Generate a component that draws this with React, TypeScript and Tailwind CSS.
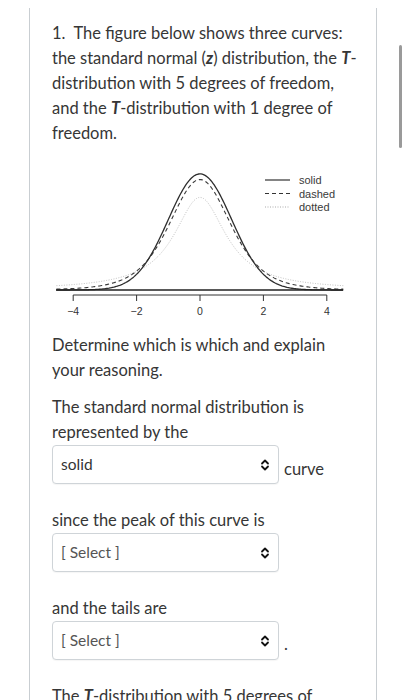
import React from 'react';

const CX = 148;
const UNIT = 31.7;
const BASE = 130;
const YS = 291;

const normal = (x: number) => Math.exp((-x * x) / 2) / Math.sqrt(2 * Math.PI);
const t5 = (x: number) => {
  const c = 0.3796066898224944;
  return c * Math.pow(1 + (x * x) / 5, -3);
};
const cauchy = (x: number) => 1 / (Math.PI * (1 + x * x));

const curvePath = (f: (x: number) => number) => {
  const pts: string[] = [];
  for (let i = 0; i <= 240; i++) {
    const x = -4.53 + (9.05 * i) / 240;
    const px = CX + x * UNIT;
    const py = BASE - f(x) * YS;
    pts.push(`${i === 0 ? 'M' : 'L'}${px.toFixed(2)},${py.toFixed(2)}`);
  }
  return pts.join(' ');
};

const Chevrons = () => (
  <svg width="10" height="12" viewBox="0 0 10 12" className="shrink-0">
    <path d="M2 4.5 L5 1.5 L8 4.5" fill="none" stroke="#111" strokeWidth="1.8" strokeLinecap="round" strokeLinejoin="round" />
    <path d="M2 7.5 L5 10.5 L8 7.5" fill="none" stroke="#111" strokeWidth="1.8" strokeLinecap="round" strokeLinejoin="round" />
  </svg>
);

const SelectBox = ({ value, muted }: { value: string; muted?: boolean }) => (
  <div className="flex h-[39px] w-[227px] items-center justify-between rounded-[4px] border border-[#cfd4d8] bg-white pl-[8px] pr-[8px] shadow-[0_1px_1px_rgba(0,0,0,0.04)]">
    <span className={`text-[15.5px] ${muted ? 'text-[#555]' : 'text-[#333]'}`}>{value}</span>
    <Chevrons />
  </div>
);

const Chart = () => {
  const ticks = [-4, -2, 0, 2, 4];
  return (
    <svg width="300" height="160" viewBox="0 0 300 160" className="block">
      <path d={curvePath(cauchy)} fill="none" stroke="#c2c2c2" strokeWidth="1" strokeDasharray="1 1.5" />
      <path d={curvePath(t5)} fill="none" stroke="#3c3c3c" strokeWidth="1.1" strokeDasharray="4 3" />
      <path d={curvePath(normal)} fill="none" stroke="#2e2e2e" strokeWidth="1.3" />
      <line x1="4" y1={BASE} x2="291" y2={BASE} stroke="#222" strokeWidth="1.6" />
      <line x1={CX - 4 * UNIT} y1="135" x2={CX + 4 * UNIT} y2="135" stroke="#333" strokeWidth="1" />
      {ticks.map((t) => (
        <g key={t}>
          <line x1={CX + t * UNIT} y1="135" x2={CX + t * UNIT} y2="141" stroke="#333" strokeWidth="1" />
          <text
            x={CX + t * UNIT}
            y="155"
            textAnchor="middle"
            fontSize="10.5"
            fill="#333"
            fontFamily="'Liberation Sans', Arial, sans-serif"
          >
            {t < 0 ? `\u2212${Math.abs(t)}` : t}
          </text>
        </g>
      ))}
      <g fontFamily="'Liberation Sans', Arial, sans-serif" fontSize="11" fill="#3a3a3a">
        <line x1="213" y1="20" x2="238" y2="20" stroke="#333" strokeWidth="1.2" />
        <line x1="213" y1="33.5" x2="238" y2="33.5" stroke="#333" strokeWidth="1.2" strokeDasharray="4 3" />
        <line x1="213" y1="47" x2="238" y2="47" stroke="#aaa" strokeWidth="1" strokeDasharray="1 1.5" />
        <text x="247" y="24">solid</text>
        <text x="247" y="37.5">dashed</text>
        <text x="247" y="51">dotted</text>
      </g>
    </svg>
  );
};

export default function App() {
  return (
    <div
      className="relative h-[700px] w-[406px] overflow-hidden bg-white text-[#363636]"
      style={{ fontFamily: "Lato, 'Open Sans', sans-serif" }}
    >
      <div className="absolute left-[399px] top-[45px] h-[103px] w-[3px] rounded-full bg-[#9a9a9a]" />
      <div className="ml-[29px] mt-[8px] h-[700px] w-[348px] border-x border-[#c9ced2] pl-[22px] pt-[13px]">
        <p className="whitespace-nowrap text-[16.5px] leading-[25px]">
          1.&nbsp; The figure below shows three curves:
          <br />
          the standard normal (<b className="italic">z</b>) distribution, the <b className="italic">T</b>-
          <br />
          distribution with 5 degrees of freedom,
          <br />
          and the <b className="italic">T</b>-distribution with 1 degree of
          <br />
          freedom.
        </p>
        <div className="mt-[14px]">
          <Chart />
        </div>
        <p className="mt-[13px] whitespace-nowrap text-[16.5px] leading-[25px]">
          Determine which is which and explain
          <br />
          your reasoning.
        </p>
        <p className="mt-[12px] whitespace-nowrap text-[16.5px] leading-[25px]">
          The standard normal distribution is
          <br />
          represented by the
        </p>
        <div className="flex items-end">
          <SelectBox value="solid" />
          <span className="mb-[2px] ml-[5px] text-[16.5px] leading-[25px]">curve</span>
        </div>
        <p className="mt-[24px] text-[16.5px] leading-[25px]">since the peak of this curve is</p>
        <SelectBox value="[ Select ]" muted />
        <p className="mt-[24px] text-[16.5px] leading-[25px]">and the tails are</p>
        <div className="flex items-end">
          <SelectBox value="[ Select ]" muted />
          <span className="mb-[3px] ml-[5px] text-[16.5px] leading-[25px]">.</span>
        </div>
        <p className="mt-[24px] whitespace-nowrap text-[16.5px] leading-[25px]">
          The <b className="italic">T</b>-distribution with 5 degrees of
        </p>
      </div>
    </div>
  );
}
